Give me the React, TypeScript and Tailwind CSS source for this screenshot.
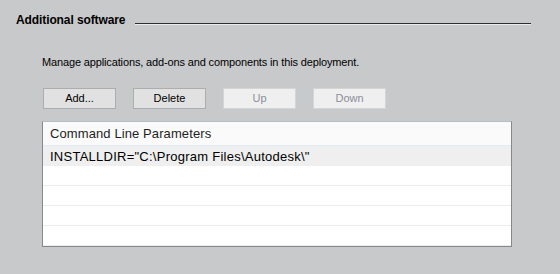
const Btn = ({ label, disabled }: { label: string; disabled?: boolean }) => {
  return (
    <div
      className={
        disabled
          ? "w-[73px] h-[21px] flex items-center justify-center border border-[#d5d5d5] bg-[#efefef] text-[#8d8d9b] text-[11px]"
          : "w-[73px] h-[21px] flex items-center justify-center border border-[#adadad] bg-[#e1e1e1] text-[#000] text-[11px]"
      }
    >
      {label}
    </div>
  );
};

const App = () => {
  const rows = ['INSTALLDIR="C:\\Program Files\\Autodesk\\"', "", "", "", ""];
  return (
    <div className="w-[560px] h-[274px] bg-[#c8c9cb] font-['Liberation_Sans',Arial,sans-serif] overflow-hidden">
      <div className="flex items-start pt-[13px] pl-[16px] pr-[29px]">
        <div className="text-[12px] leading-[14px] font-bold text-[#000] whitespace-nowrap tracking-[-0.1px]">Additional software</div>
        <div className="flex-1 ml-[10px] mt-[10px] h-[2px] border-t border-[#2e2e2e] border-b border-b-[#ececec]"></div>
      </div>
      <div className="mt-[28px] pl-[42px] text-[11px] leading-[14px] text-[#000] tracking-[-0.14px]">
        Manage applications, add-ons and components in this deployment.
      </div>
      <div className="mt-[19px] pl-[43px] flex gap-[17px]">
        <Btn label="Add..." />
        <Btn label="Delete" />
        <Btn label="Up" disabled />
        <Btn label="Down" disabled />
      </div>
      <div className="mt-[12px] ml-[42px] w-[470px] h-[126px] border border-[#84888f] border-t-[#b9bcc2] bg-white flex flex-col">
        <div className="h-[24px] bg-[#fafafa] border-b border-[#e3ebf7] flex items-center pl-[7px] text-[13px] text-[#1e1e1e] leading-none tracking-[0.1px]">
          Command Line Parameters
        </div>
        {rows.map((r, i) => (
          <div
            key={i}
            className={
              i === 0
                ? "h-[20px] bg-[#efefef] flex items-center pl-[7px] text-[13px] text-[#000] leading-none tracking-[0.25px]"
                : "h-[20px] border-b border-[#ececec] flex items-center pl-[7px] text-[13px] leading-none"
            }
          >
            {r}
          </div>
        ))}
      </div>
    </div>
  );
};

export default App;
